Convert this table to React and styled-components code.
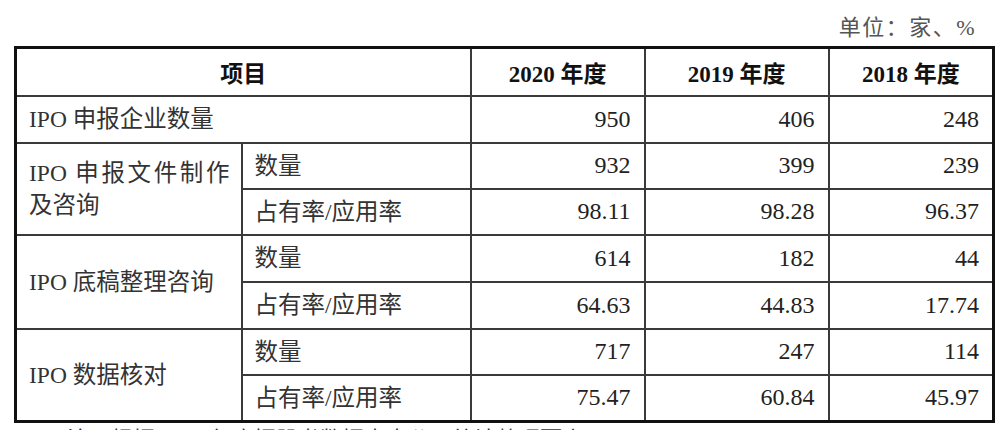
import React from "react";
import styled, { createGlobalStyle } from "styled-components";

const Global = createGlobalStyle`
  html, body { margin: 0; padding: 0; background: #fff; }
  body {
    font-family: "Liberation Serif", "Noto Sans CJK SC", serif;
    color: #222;
    -webkit-font-smoothing: antialiased;
  }
`;

const Page = styled.div`
  width: 1000px;
  height: 430px;
  overflow: hidden;
  padding-left: 14px;
  box-sizing: border-box;
`;

const Unit = styled.div`
  height: 46px;
  display: flex;
  align-items: flex-end;
  justify-content: flex-end;
  padding-right: 24px;
  padding-bottom: 7px;
  box-sizing: border-box;
  font-family: "Liberation Serif", "Noto Sans CJK SC", serif;
  font-size: 22px;
  letter-spacing: 1.5px;
  line-height: 1;
  color: #555;
`;

const Table = styled.table`
  width: 978px;
  border-collapse: collapse;
  table-layout: fixed;
  border: 3px solid #111;
`;

const Row = styled.tr`
  height: ${(p) => p.$h}px;
`;

const Head = styled.th`
  border: 2px solid #3a3a3a;
  padding: 0 14px;
  font-size: 23px;
  font-weight: 700;
  text-align: center;
  color: #111;
  font-family: "Liberation Serif", "Noto Sans CJK SC", serif;
`;

const Label = styled.td`
  border: 2px solid #3a3a3a;
  padding: 0 11px 0 12px;
  font-size: 23.5px;
  color: #333;
  text-align: left;
  vertical-align: middle;
  line-height: 32px;
  font-weight: 400;
  white-space: nowrap;
`;

const Num = styled.td`
  border: 2px solid #3a3a3a;
  padding: 0 13px 0 8px;
  font-size: 24px;
  color: #222;
  text-align: right;
  vertical-align: middle;
`;

const Line = styled.span`
  display: block;
  text-align: ${(p) => (p.$spread ? "justify" : "left")};
  text-align-last: ${(p) => (p.$spread ? "justify" : "left")};
`;

const Note = styled.p`
  margin: 4px 0 0 53px;
  font-size: 22px;
  line-height: 26px;
  color: #333;
  white-space: nowrap;
`;

const rows = [
  {
    label: ["IPO 申报企业数量"],
    merged: true,
    subs: [{ name: null, v: ["950", "406", "248"] }],
  },
  {
    label: ["IPO 申报文件制作", "及咨询"],
    spread: true,
    subs: [
      { name: "数量", v: ["932", "399", "239"] },
      { name: "占有率/应用率", v: ["98.11", "98.28", "96.37"] },
    ],
  },
  {
    label: ["IPO 底稿整理咨询"],
    subs: [
      { name: "数量", v: ["614", "182", "44"] },
      { name: "占有率/应用率", v: ["64.63", "44.83", "17.74"] },
    ],
  },
  {
    label: ["IPO 数据核对"],
    subs: [
      { name: "数量", v: ["717", "247", "114"] },
      { name: "占有率/应用率", v: ["75.47", "60.84", "45.97"] },
    ],
  },
];

const heights = [47, 46, 46, 47, 47, 46, 47];

export default function App() {
  let hi = 0;
  return (
    <>
      <Global />
      <Page>
        <Unit>单位：家、%</Unit>
        <Table>
          <colgroup>
            <col style={{ width: 226 }} />
            <col style={{ width: 229 }} />
            <col style={{ width: 174 }} />
            <col style={{ width: 184 }} />
            <col style={{ width: 165 }} />
          </colgroup>
          <thead>
            <Row $h={48}>
              <Head colSpan={2}>项目</Head>
              <Head>2020 年度</Head>
              <Head>2019 年度</Head>
              <Head>2018 年度</Head>
            </Row>
          </thead>
          <tbody>
            {rows.map((r, ri) =>
              r.subs.map((s, si) => {
                const h = heights[hi++];
                return (
                  <Row key={`${ri}-${si}`} $h={h}>
                    {si === 0 && (
                      <Label
                        rowSpan={r.subs.length}
                        colSpan={r.merged ? 2 : 1}
                      >
                        {r.label.map((l, li) => (
                          <Line
                            key={li}
                            $spread={r.spread && li < r.label.length - 1}
                          >
                            {l}
                          </Line>
                        ))}
                      </Label>
                    )}
                    {!r.merged && <Label>{s.name}</Label>}
                    {s.v.map((v, vi) => (
                      <Num key={vi}>{v}</Num>
                    ))}
                  </Row>
                );
              })
            )}
          </tbody>
        </Table>
        <Note>注：根据 2020 年度招股书数据由本公司统计整理而来</Note>
      </Page>
    </>
  );
}
